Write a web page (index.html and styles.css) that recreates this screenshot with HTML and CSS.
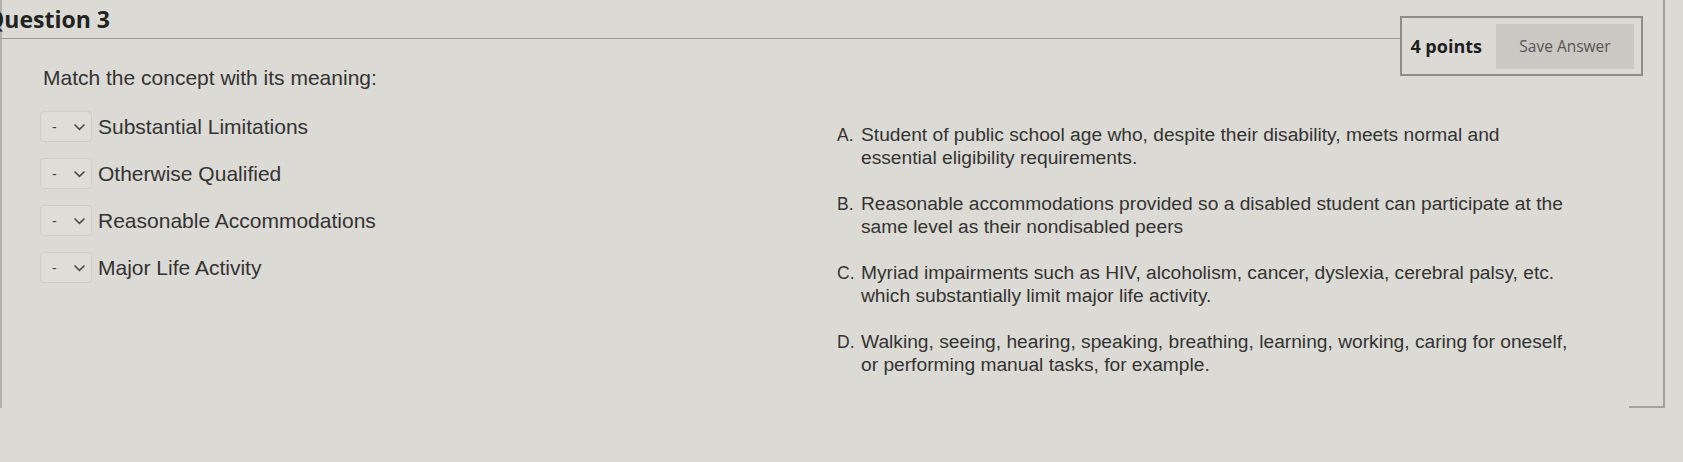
FILE: index.html
```html
<!DOCTYPE html>
<html lang="en">
<head>
    <meta charset="UTF-8">
    <meta name="viewport" content="width=device-width, initial-scale=1.0">
    <title>Question 3</title>
    <link rel="stylesheet" href="styles.css">
</head>
<body>
    <div class="panel">
        <div class="head">
            <h2 class="title">Question 3</h2>
            <div class="points">
                <span class="worth">4 points</span>
                <button class="save">Save Answer</button>
            </div>
        </div>

        <p class="prompt">Match the concept with its meaning:</p>

        <div class="match">
            <ul class="concepts">
                <li><span class="pick"><span class="dash">-</span><svg width="13" height="8" viewBox="0 0 13 8"><path d="M1.5 1.5 6.5 6.3 11.5 1.5" fill="none" stroke="#4a4a4a" stroke-width="1.6"/></svg></span>Substantial Limitations</li>
                <li><span class="pick"><span class="dash">-</span><svg width="13" height="8" viewBox="0 0 13 8"><path d="M1.5 1.5 6.5 6.3 11.5 1.5" fill="none" stroke="#4a4a4a" stroke-width="1.6"/></svg></span>Otherwise Qualified</li>
                <li><span class="pick"><span class="dash">-</span><svg width="13" height="8" viewBox="0 0 13 8"><path d="M1.5 1.5 6.5 6.3 11.5 1.5" fill="none" stroke="#4a4a4a" stroke-width="1.6"/></svg></span>Reasonable Accommodations</li>
                <li><span class="pick"><span class="dash">-</span><svg width="13" height="8" viewBox="0 0 13 8"><path d="M1.5 1.5 6.5 6.3 11.5 1.5" fill="none" stroke="#4a4a4a" stroke-width="1.6"/></svg></span>Major Life Activity</li>
            </ul>

            <ol class="meanings">
                <li><span class="letter">A.</span><span>Student of public school age who, despite their disability, meets normal and essential eligibility requirements.</span></li>
                <li><span class="letter">B.</span><span>Reasonable accommodations provided so a disabled student can participate at the same level as their nondisabled peers</span></li>
                <li><span class="letter">C.</span><span>Myriad impairments such as HIV, alcoholism, cancer, dyslexia, cerebral palsy, etc. which substantially limit major life activity.</span></li>
                <li><span class="letter">D.</span><span>Walking, seeing, hearing, speaking, breathing, learning, working, caring for oneself, or performing manual tasks, for example.</span></li>
            </ol>
        </div>
    </div>
</body>
</html>
```

FILE: styles.css
```css
body {
    margin: 0;
    background: #dcdad4;
    color: #333;
    font-family: 'Liberation Sans', Arial, sans-serif;
    overflow: hidden;
}

.panel {
    position: relative;
    width: 1665px;
    height: 408px;
    border-right: 2px solid #9e9d98;
    border-left: 2px solid #b3b2ad;
    box-sizing: border-box;
}

/* little return at the bottom of the frame */
.panel::after {
    content: "";
    position: absolute;
    right: -2px;
    bottom: 0;
    width: 36px;
    height: 2px;
    background: #a3a29d;
}

.head {
    display: flex;
    align-items: flex-start;
    height: 40px;
}

.title {
    flex: 1;
    margin: 0 0 0 -16px;
    height: 39px;
    box-sizing: border-box;
    padding-top: 3px;
    border-bottom: 1px solid #9b9a95;
    font-family: 'Open Sans', sans-serif;
    font-size: 23px;
    font-weight: 700;
    color: #222;
}

.points {
    display: flex;
    align-items: center;
    gap: 14px;
    margin-top: 16px;
    margin-right: 20px;
    padding: 6px 7px 6px 8px;
    border: 2px solid #8e8d89;
    height: 60px;
    box-sizing: border-box;
    position: relative;
    z-index: 1;
}

.worth {
    font-family: 'Open Sans', sans-serif;
    font-weight: 700;
    font-size: 18px;
    color: #1e1e1e;
}

.save {
    height: 45px;
    width: 138px;
    border: none;
    background: #c9c8c3;
    color: #565656;
    font-family: 'Open Sans', sans-serif;
    font-size: 15.5px;
}

.prompt {
    margin: 26px 0 0 41px;
    font-size: 21px;
    line-height: 24px;
}

.match {
    display: flex;
    margin-top: 21px;
}

.concepts {
    list-style: none;
    margin: 0;
    padding: 0 0 0 38px;
    width: 797px;
    display: flex;
    flex-direction: column;
    gap: 16px;
}

.concepts li {
    display: flex;
    align-items: center;
    gap: 6px;
    font-size: 21px;
    height: 31px;
}

.pick {
    display: flex;
    align-items: center;
    justify-content: space-between;
    width: 52px;
    height: 31px;
    box-sizing: border-box;
    padding: 0 5px 0 11px;
    border: 1px solid #cfcdc7;
    border-radius: 4px;
    background: #dfddd8;
    color: #444;
    font-size: 14px;
}

.meanings {
    list-style: none;
    margin: 13px 0 0;
    padding: 0;
    width: 731px;
    display: flex;
    flex-direction: column;
    gap: 24px;
}

.meanings li {
    display: flex;
    font-size: 19.2px;
    line-height: 22.5px;
}

.letter {
    width: 24px;
    flex-shrink: 0;
    font-size: 17.5px;
}
```
